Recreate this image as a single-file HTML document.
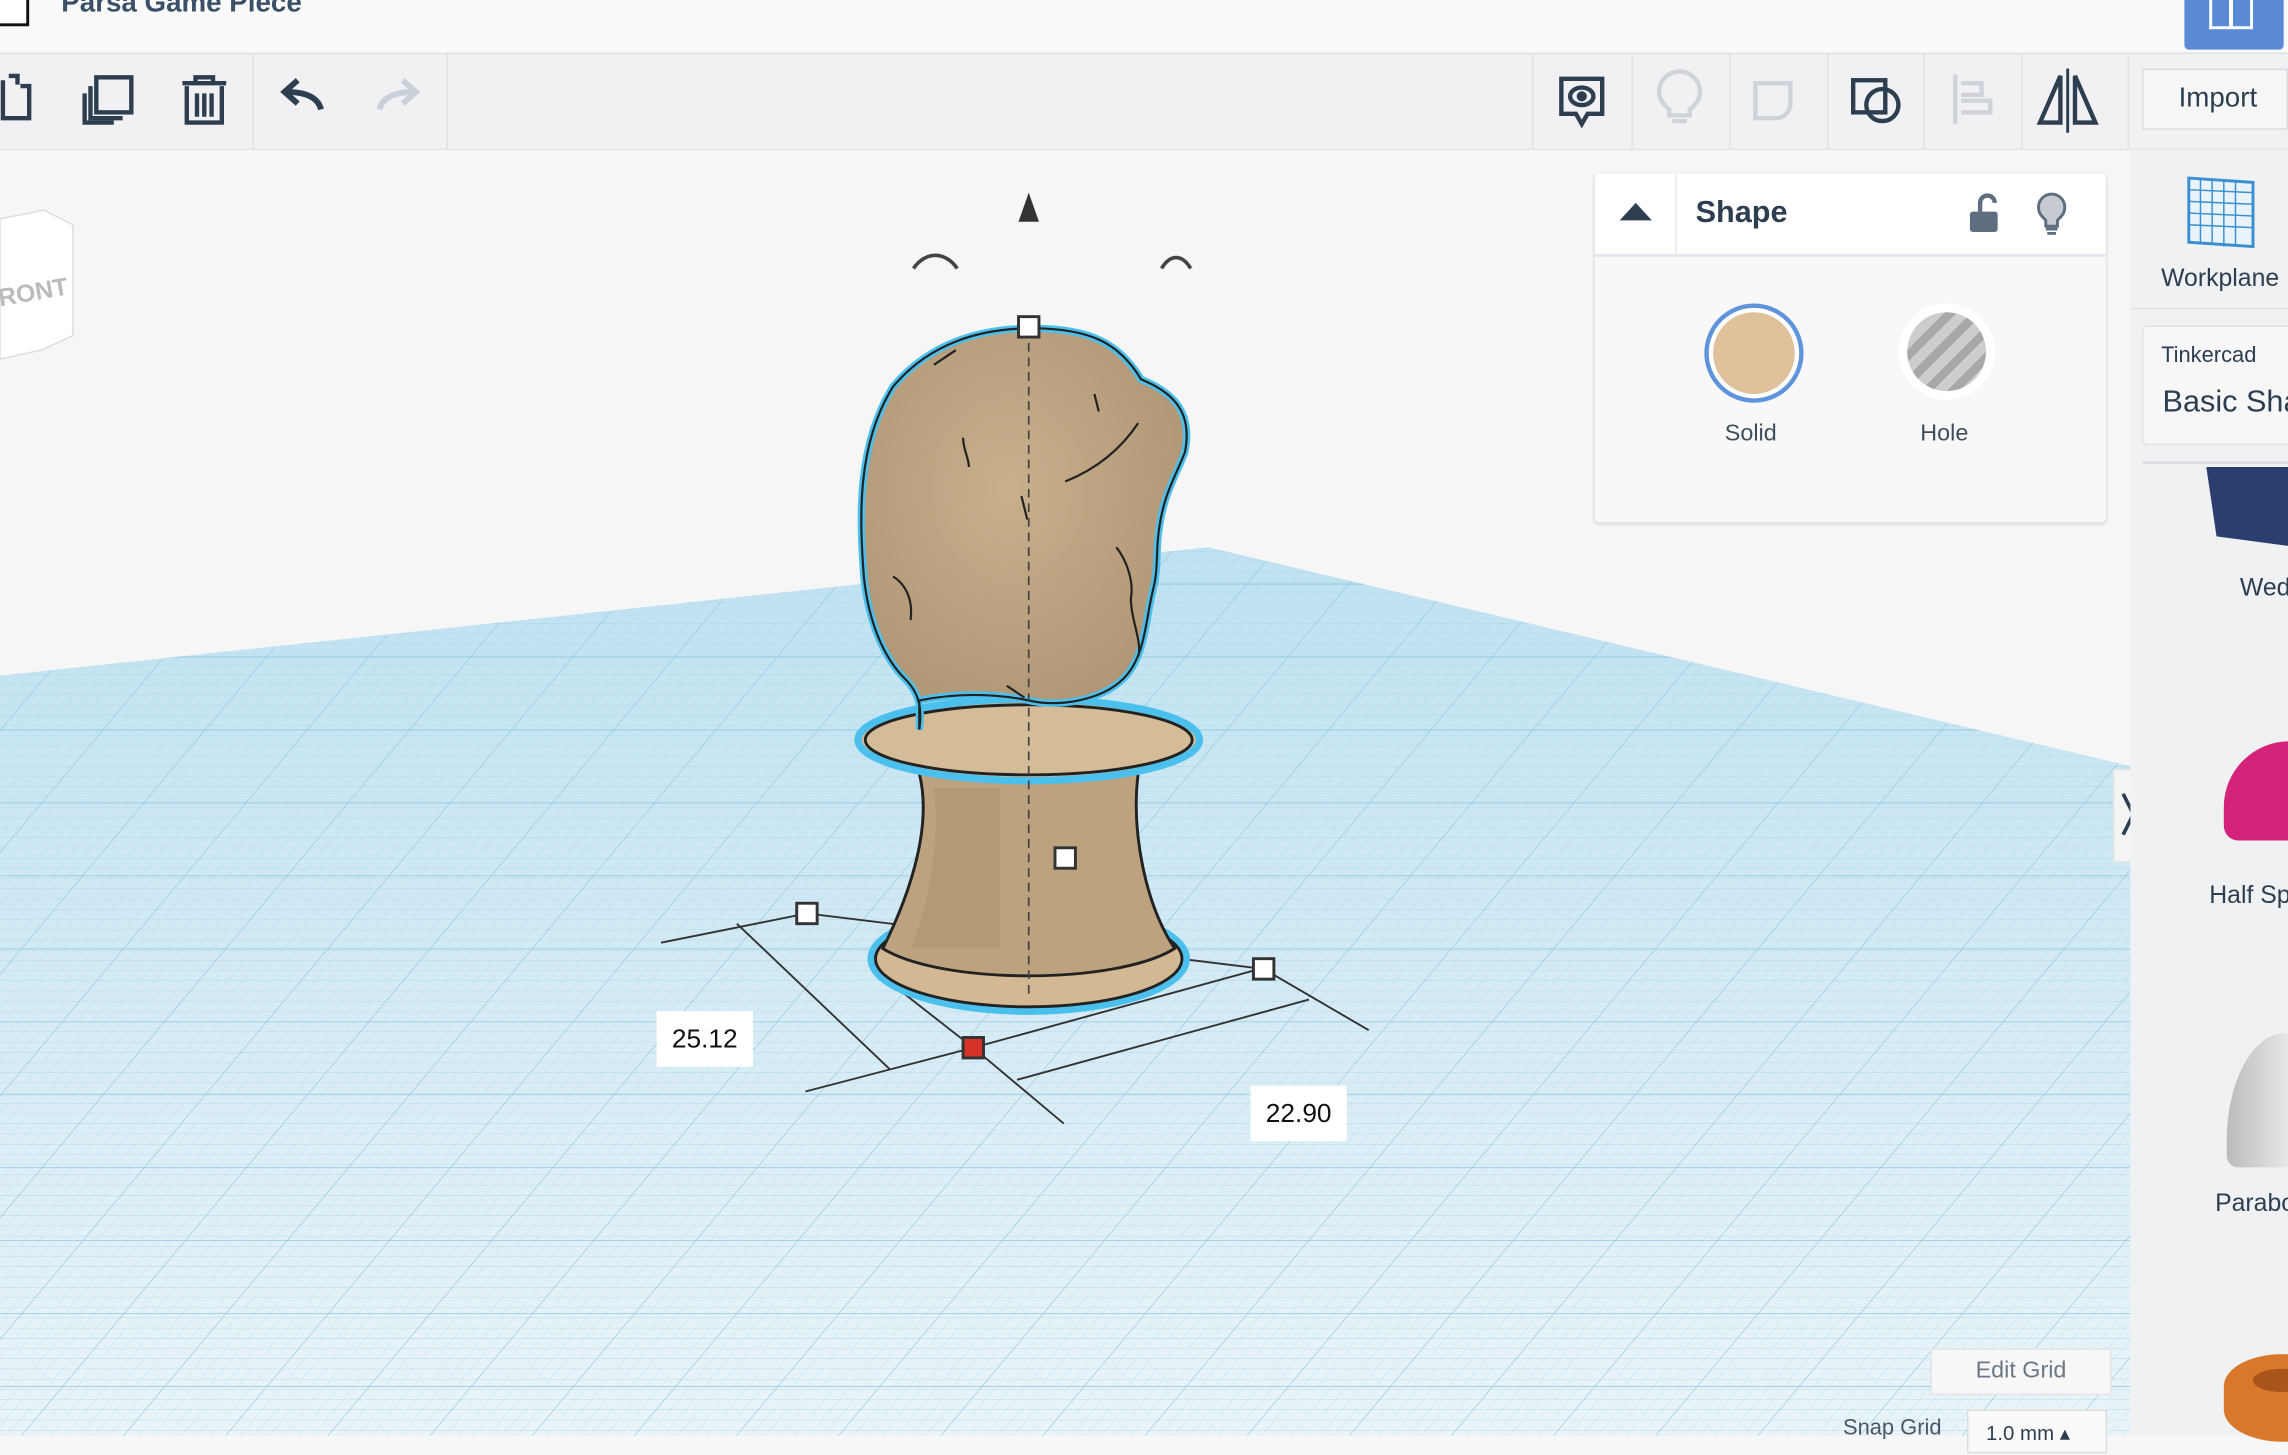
<!DOCTYPE html>
<html><head><meta charset="utf-8"><style>
html,body{margin:0;padding:0;width:2288px;height:1436px;overflow:hidden;background:#f7f7f8}
#w{position:absolute;left:0;top:0;width:1568px;height:984px;transform:scale(1.4592);transform-origin:0 0;font-family:"Liberation Sans","DejaVu Sans",sans-serif;color:#2d3e50}
.abs{position:absolute}
</style></head><body><div id="w">
<!-- top bar -->
<div class="abs" style="left:0;top:0;width:1568px;height:36px;background:#fafafa;border-bottom:1px solid #dde0e4"></div>
<div class="abs" style="left:-4px;top:-4px;width:20px;height:18px;border:2px solid #111;background:#fff"></div>
<div class="abs" style="left:42px;top:-8px;font-size:19px;font-weight:bold;color:#3a4f68">Parsa Game Piece</div>
<div class="abs" style="left:1497px;top:0;width:68px;height:34px;background:#5a8ad6;border-radius:0 0 3px 3px"></div>
<div class="abs" style="left:1514px;top:0;width:30px;height:20px;border:2px solid #fff;border-top:none;box-sizing:border-box;background:linear-gradient(90deg,transparent 45%,#fff 45%,#fff 55%,transparent 55%)"></div>
<!-- toolbar -->
<div class="abs" style="left:0;top:37px;width:1568px;height:65px;background:#f1f1f3;border-bottom:1px solid #e2e4e7"></div>
<div class="abs" style="left:173px;top:37px;width:1px;height:65px;background:#dfe1e4"></div>
<div class="abs" style="left:306px;top:37px;width:1px;height:65px;background:#dfe1e4"></div>
<div class="abs" style="left:1050px;top:37px;width:1px;height:65px;background:#dfe1e4"></div>
<div class="abs" style="left:1118px;top:37px;width:1px;height:65px;background:#dfe1e4"></div>
<div class="abs" style="left:1185px;top:37px;width:1px;height:65px;background:#dfe1e4"></div>
<div class="abs" style="left:1252px;top:37px;width:1px;height:65px;background:#dfe1e4"></div>
<div class="abs" style="left:1318px;top:37px;width:1px;height:65px;background:#dfe1e4"></div>
<div class="abs" style="left:1385px;top:37px;width:1px;height:65px;background:#dfe1e4"></div>
<div class="abs" style="left:1458px;top:37px;width:1px;height:65px;background:#dfe1e4"></div>
<svg class="abs" style="left:0;top:37px" width="1568" height="65" viewBox="0 0 1568 65" fill="none" stroke="#2d3e50" stroke-width="3">
 <path d="M2 18v26h18V22h-6"/><path d="M6 15h6v6"/>
 <rect x="66" y="16" width="24" height="24"/><path d="M62 22v22h22"/><path d="M58 27v20h20"/>
 <path d="M125 20h30M134 20v-4h12v4M128 22v25h24V22M135 27v16M140 27v16M145 27v16"/>
 <path d="M220 38c-2-8-10-12-24-12M204 18l-9 8 9 8" stroke-width="4"/>
 <path d="M260 38c2-8 10-12 24-12M276 18l9 8-9 8" stroke="#c9d0d8" stroke-width="4"/>
 <path d="M1070 17h28v24h-10l-4 7-4-7h-10z"/><ellipse cx="1084" cy="29" rx="8" ry="6"/><circle cx="1084" cy="29" r="2" fill="#2d3e50"/>
 <path d="M1144 38c-5-4-7-8-7-12a14 14 0 0 1 28 0c0 4-2 8-7 12v4h-14zM1146 46h10" stroke="#cfd4da"/>
 <path d="M1203 20h24v14a10 10 0 0 1-10 10h-14z" stroke="#cfd4da"/>
 <rect x="1270" y="18" width="22" height="22"/><circle cx="1290" cy="35" r="11"/>
 <path d="M1340 14v34M1344 20h14v8h-14M1344 32h20v8h-20" stroke="#cfd4da"/>
 <path d="M1398 47l14-32v32zM1422 47V15l14 32z"/><path d="M1417 10v44" stroke-width="2"/>
</svg>
<div class="abs" style="left:1468px;top:47px;width:100px;height:42px;border:1px solid #d9dce0;background:#f6f6f7;box-sizing:border-box;font-size:19px;line-height:40px;padding-left:24px;color:#2d3e50">Import</div>
<!-- canvas -->
<div class="abs" style="left:0;top:103px;width:1460px;height:881px;background:#f6f6f6;overflow:hidden">
<svg width="1460" height="881" viewBox="0 103 1460 881">
 <defs>
  <pattern id="g" width="10" height="7" patternUnits="userSpaceOnUse" patternTransform="skewX(-40)">
   <path d="M0 0H10M0 0V7" stroke="#a9d6e9" stroke-width="0.5" fill="none"/>
  </pattern>
  <pattern id="G" width="70" height="50" patternUnits="userSpaceOnUse" patternTransform="skewX(-40)">
   <path d="M0 0H70M0 0V50" stroke="#8cc6df" stroke-width="1" fill="none"/>
  </pattern>
  <linearGradient id="fade" x1="0" y1="0" x2="0" y2="1"><stop offset="0" stop-color="#bfe1f1"/><stop offset="1" stop-color="#eaf4f8"/></linearGradient>
  <radialGradient id="hd" cx=".45" cy=".4" r=".7"><stop offset="0" stop-color="#c9b08d"/><stop offset="1" stop-color="#ab9170"/></radialGradient>
 </defs>
 <polygon points="0,463 828,375 1460,525 1460,984 0,984" fill="url(#fade)"/>
 <polygon points="0,463 828,375 1460,525 1460,984 0,984" fill="url(#g)"/>
 <polygon points="0,463 828,375 1460,525 1460,984 0,984" fill="url(#G)"/>
 <!-- front cube -->
 <path d="M0 150l30-6 20 10v76l-22 10-28 6z" fill="#fff" stroke="#ddd"/>
 <text x="0" y="210" font-size="17" fill="#bbb" font-weight="bold" transform="rotate(-10 0 210)">RONT</text>
 <!-- dims -->
 <g stroke="#333" stroke-width="1.3" fill="none">
  <path d="M453 646l100-20M553 626l313 38M603 668l64 50M667 718l200-55M505 633l105 100M552 748l115-30M667 718l62 52M697 740l200-55M866 664l72 42"/>
 </g>
 <rect x="546" y="619" width="14" height="14" fill="#fff" stroke="#333" stroke-width="2"/>
 <rect x="859" y="657" width="14" height="14" fill="#fff" stroke="#333" stroke-width="2"/>
 <rect x="660" y="711" width="14" height="14" fill="#d63228" stroke="#333" stroke-width="2"/>
 <!-- figure -->
 <ellipse cx="705" cy="657" rx="108" ry="36" fill="#d2b994" stroke="#4cc0ec" stroke-width="5"/>
 <ellipse cx="705" cy="657" rx="105" ry="33" fill="none" stroke="#222" stroke-width="2"/>
 <path d="M630 530c10 40-10 90-25 120 40 25 160 25 200 0-20-30-30-80-25-120z" fill="#bca27f" stroke="#222" stroke-width="2"/>
 <path d="M640 540c5 40-5 80-15 110h60v-110z" fill="#a68b68" opacity=".4"/>
 <ellipse cx="705" cy="507" rx="117" ry="28" fill="#d5bc98" stroke="#4cc0ec" stroke-width="5"/>
 <ellipse cx="705" cy="507" rx="112" ry="24" fill="none" stroke="#222" stroke-width="2"/>
 <path d="M630 500c2-15 0-25-10-35-15-15-25-40-28-70-3-40-5-90 20-130 25-30 60-40 95-40 40 0 60 10 75 35 25 10 35 25 30 50-8 20-15 30-18 55-2 15 0 25-4 40-5 20-5 45-20 60-15 15-45 20-65 15-25-5-50-5-75 0z" fill="url(#hd)" stroke="#4cc0ec" stroke-width="5"/>
 <path d="M630 500c2-15 0-25-10-35-15-15-25-40-28-70-3-40-5-90 20-130 25-30 60-40 95-40 40 0 60 10 75 35 25 10 35 25 30 50-8 20-15 30-18 55-2 15 0 25-4 40-5 20-5 45-20 60-15 15-45 20-65 15-25-5-50-5-75 0z" fill="none" stroke="#222" stroke-width="1.5"/>
 <path d="M730 330c25-10 40-25 50-40M765 375c8 10 12 25 10 35 0 15 8 30 5 40M612 395c8 5 14 15 12 30M640 250l15-10M660 300c0 8 4 14 4 20M750 270l3 12M700 340l4 16M690 470l12 8" stroke="#222" stroke-width="1.5" fill="none"/>
 <path d="M705 225v460" stroke="#444" stroke-dasharray="6 4" stroke-width="1.2"/>
 <rect x="698" y="217" width="14" height="14" fill="#fff" stroke="#333" stroke-width="2"/>
 <rect x="723" y="581" width="14" height="14" fill="#fff" stroke="#333" stroke-width="2"/>
 <path d="M698 152l7-20 7 20z" fill="#333"/>
 <path d="M626 184c8-12 22-12 30 0M796 184c6-10 14-10 20 0" stroke="#444" stroke-width="2.5" fill="none"/>
</svg>
</div>
<div class="abs" style="left:450px;top:693px;width:66px;height:38px;background:#fff;font-size:18px;line-height:38px;text-align:center;color:#111">25.12</div>
<div class="abs" style="left:857px;top:744px;width:66px;height:38px;background:#fff;font-size:18px;line-height:38px;text-align:center;color:#111">22.90</div>
<div class="abs" style="left:1448px;top:527px;width:20px;height:62px;background:#f4f4f4;border:1px solid #e3e3e3"></div>
<svg class="abs" style="left:1450px;top:540px" width="16" height="36"><path d="M5 4l7 14-7 14" stroke="#2d3e50" stroke-width="2.5" fill="none"/></svg>
<div class="abs" style="left:1323px;top:924px;width:122px;height:30px;background:#f7f7f7;border:1px solid #e4e4e4;font-size:16px;line-height:30px;text-align:center;color:#6b7785">Edit Grid</div>
<div class="abs" style="left:1263px;top:970px;font-size:15px;color:#4a5664">Snap Grid</div>
<div class="abs" style="left:1348px;top:966px;width:96px;height:30px;background:#fafafa;border:1px solid #ddd;font-size:14px;line-height:30px;padding-left:12px;box-sizing:border-box">1.0 mm ▴</div>
<!-- shape panel -->
<div class="abs" style="left:1093px;top:119px;width:350px;height:239px;background:#f8f8f8;border-radius:3px;box-shadow:0 1px 3px rgba(0,0,0,.15)">
 <div style="position:absolute;left:0;top:0;width:350px;height:55px;background:#fff;border-bottom:2px solid #e4e7eb;border-radius:3px 3px 0 0"></div>
 <div style="position:absolute;left:55px;top:0;width:1px;height:55px;background:#e4e7eb"></div>
 <div style="position:absolute;left:17px;top:20px;width:0;height:0;border-left:11px solid transparent;border-right:11px solid transparent;border-bottom:12px solid #2d3e50"></div>
 <div style="position:absolute;left:69px;top:15px;font-size:21px;font-weight:bold;color:#2d3e50">Shape</div>
 <svg style="position:absolute;left:255px;top:12px" width="70" height="30"><path d="M9 14v-6a5 5 0 0 1 10 0" stroke="#5e6e80" stroke-width="3" fill="none"/><rect x="2" y="14" width="19" height="14" rx="2" fill="#5e6e80"/><path d="M54 20c-3-3-5-5-5-9a9 9 0 0 1 18 0c0 4-2 6-5 9v4h-8z" fill="#c8ccd2" stroke="#5e6e80" stroke-width="2"/><path d="M54 26h8M55 29h6" stroke="#5e6e80" stroke-width="2"/></svg>
 <div style="position:absolute;left:75px;top:89px;width:68px;height:68px;border:3px solid #5f93dc;border-radius:50%;background:#fff;box-sizing:border-box"></div>
 <div style="position:absolute;left:81px;top:95px;width:56px;height:56px;border-radius:50%;background:#dfc29c"></div>
 <div style="position:absolute;left:208px;top:89px;width:66px;height:66px;border-radius:50%;background:#fff"></div>
 <div style="position:absolute;left:214px;top:95px;width:54px;height:54px;border-radius:50%;background:repeating-linear-gradient(-45deg,#a8a8a8 0 6px,#cdcdcd 6px 13px)"></div>
 <div style="position:absolute;left:89px;top:170px;font-size:16px;color:#3f4d5c">Solid</div>
 <div style="position:absolute;left:223px;top:170px;font-size:16px;color:#3f4d5c">Hole</div>
</div>
<!-- right panel -->
<div class="abs" style="left:1460px;top:103px;width:108px;height:881px;background:#f0f1f3"></div>
<svg class="abs" style="left:1498px;top:120px" width="48" height="52"><path d="M2 2l44 3v44l-44-3z" fill="#e8f3fb" stroke="#3a8fd0" stroke-width="2"/><path d="M10 3v44M18 3v45M26 4v45M34 4v45M2 10l44 2M2 18l44 2M2 26l44 2M2 34l44 2" stroke="#3a8fd0" stroke-width="1"/></svg>
<div class="abs" style="left:1481px;top:181px;font-size:17px;color:#2d3e50">Workplane</div>
<div class="abs" style="left:1460px;top:211px;width:108px;height:1px;background:#dfe1e4"></div>
<div class="abs" style="left:1468px;top:223px;width:110px;height:80px;background:#f7f7f8;border:1px solid #e0e2e5;border-radius:3px"></div>
<div class="abs" style="left:1481px;top:235px;font-size:15px;color:#2d3e50">Tinkercad</div>
<div class="abs" style="left:1482px;top:264px;font-size:21px;color:#2d3e50;white-space:nowrap">Basic Shapes</div>
<div class="abs" style="left:1468px;top:316px;width:100px;height:2px;background:#dfe1e4"></div>
<div class="abs" style="left:1512px;top:320px;width:70px;height:56px;background:#2c3e70;clip-path:polygon(0 0,100% 0,100% 100%,10% 85%)"></div>
<div class="abs" style="left:1535px;top:393px;font-size:17px;color:#2d3e50">Wedge</div>
<div class="abs" style="left:1524px;top:508px;width:90px;height:68px;background:#d4237a;border-radius:45px 45px 10px 10px"></div>
<div class="abs" style="left:1514px;top:604px;font-size:17px;color:#2d3e50;white-space:nowrap">Half Sphere</div>
<div class="abs" style="left:1526px;top:708px;width:80px;height:92px;background:linear-gradient(90deg,#bbb,#eee 60%,#ccc);border-radius:50% 50% 8px 8px/80% 80% 8px 8px"></div>
<div class="abs" style="left:1518px;top:815px;font-size:17px;color:#2d3e50">Paraboloid</div>
<div class="abs" style="left:1524px;top:928px;width:80px;height:60px;background:#d9782a;border-radius:40px/22px"></div>
<div class="abs" style="left:1544px;top:938px;width:40px;height:16px;background:#a9541a;border-radius:50%"></div>
</div></body></html>
